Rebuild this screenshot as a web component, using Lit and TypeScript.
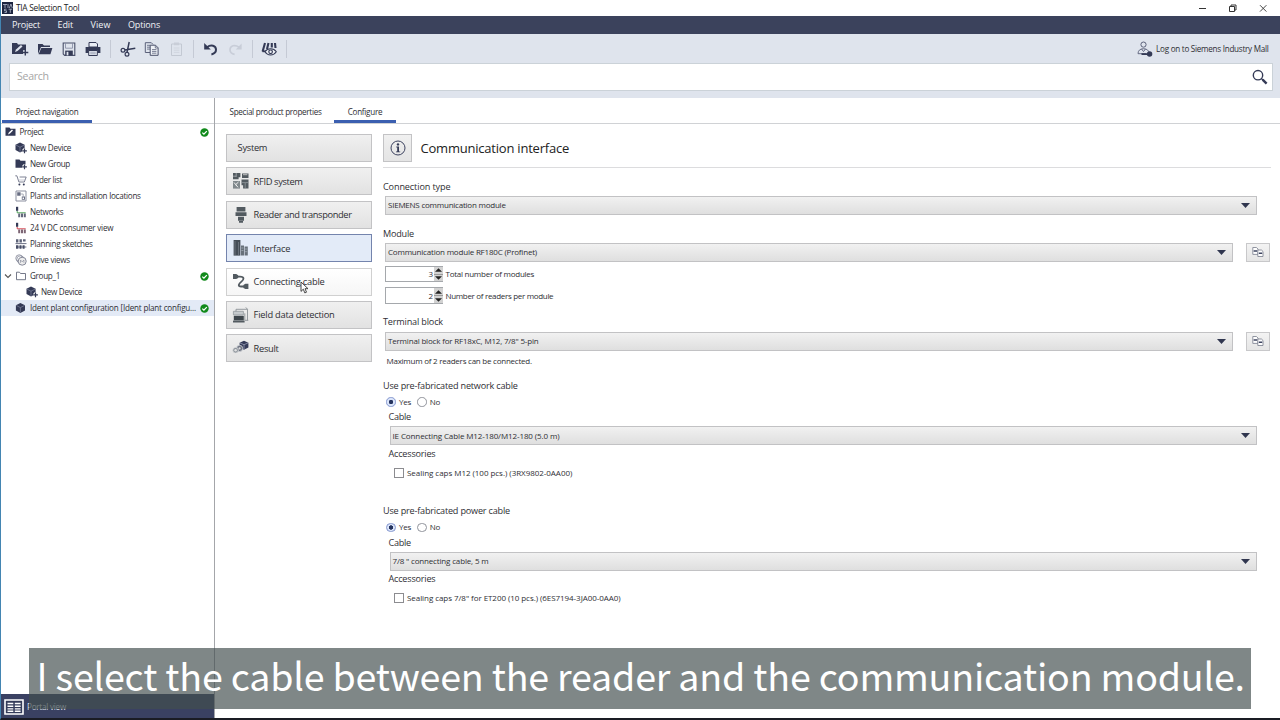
import { LitElement, html, svg, css, TemplateResult } from "lit";

const FAMILY = '"Open Sans"';
const ctx = document.createElement("canvas").getContext("2d")!;

/** Text set at `size` px and tracked so that it runs `width` px wide. */
const fit = (text: string, width: number, size: number, family = FAMILY) => {
  ctx.font = `100px ${family}`;
  const natural = (ctx.measureText(text).width * size) / 100;
  const ls = (width - natural) / text.length;
  return html`<span class="t" style="font-size:${size}px;letter-spacing:${ls.toFixed(3)}px">${text}</span>`;
};

const ic = (w: number, h: number, body: TemplateResult | unknown) =>
  html`<svg width=${w} height=${h} viewBox="0 0 ${w} ${h}" fill="none">${body}</svg>`;

const N = "#343a56";
const cube = svg`<path d="M5 0.6 9.6 2.8V8L5 10.6.5 8V2.8z" fill=${N}/><path d="M.8 3 5 5.2 9.3 3M5 5.2V10" stroke="#8d93ad" stroke-width=".6"/>`;
const plus = svg`<path d="M9.5 6.2v5M7 8.7h5" stroke="#fff" stroke-width="2.6"/><path d="M9.5 6.4v4.8M7.1 8.8h4.8" stroke=${N} stroke-width="1.2"/>`;
const folderFill = svg`<path d="M.5 1.5h4l1 1.2h5v7H.5z" fill=${N}/>`;

const tools = {
  newProject: ic(18, 16, svg`<path d="M1 2h5l1 1.5h8V9l-3 .3V13H1z" fill=${N}/><path d="M4 11l1-2.5L10 4l1.5 1.5-5 4.5z" fill="#dfe4ee"/><path d="M14.3 8.5v6M11.3 11.5h6" stroke=${N} stroke-width="1.4"/>`),
  open: ic(16, 16, svg`<path d="M1 13V3h4.5L7 4.5h6V6H4z" fill=${N}/><path d="M4.3 7H15.4l-2 6.2H1.6z" fill=${N}/>`),
  save: ic(14, 16, svg`<path d="M1.2 2h11.6v12.4H2.6L1.2 13z" stroke="#4a506a" stroke-width="1.1"/><path d="M3.5 2.2v5h7v-5" stroke="#8087a0" stroke-width=".8"/><path d="M3.2 9.6h7.6v4.8H3.2z" fill=${N}/><path d="M4.6 10.8h1.8v3.6H4.6z" fill="#dfe4ee"/>`),
  print: ic(16, 16, svg`<path d="M4 1.5h7l1.5 1.5v3H4z" fill="#e9edf4" stroke=${N}/><path d="M.6 6h14.8v6H.6z" fill=${N}/><path d="M3.7 9.5h8.6v5H3.7z" fill="#e9edf4" stroke=${N}/><path d="M5.2 11.2h5.6M5.2 12.8h5.6" stroke="#8087a0" stroke-width=".7"/>`),
  cut: ic(16, 16, svg`<circle cx="3" cy="9.3" r="1.9" stroke=${N} stroke-width="1.2"/><circle cx="7" cy="13.2" r="1.9" stroke=${N} stroke-width="1.2"/><path d="M4.7 9 15.3 7.2M7 11.4 9.2 1" stroke=${N} stroke-width="1.5"/>`),
  copy: ic(16, 16, svg`<path d="M6 11.5H1.3V1.7h6L9 3.4" stroke="#5b617a"/><path d="M3 4.3h3M3 6.2h3M3 8.1h3" stroke="#5b617a" stroke-width=".8"/><path d="M6.2 4.2h5.3l2.6 2.6v7.5H6.2z" fill="#eef1f6" stroke="#4a506a"/><path d="M11.3 4.4V7h2.6M8 8.6h4.4M8 10.4h4.4M8 12.2h4.4" stroke="#5b617a" stroke-width=".8"/>`),
  paste: ic(14, 16, svg`<path d="M1.5 3h10v11.5h-10z" stroke="#c3c9d3"/><path d="M4 1.5h5v2.7H4z" fill="#c9ced8"/><path d="M3.8 7h5.6M3.8 9.2h5.6M3.8 11.4h5.6" stroke="#cdd2dc" stroke-width=".8"/>`),
  undo: ic(16, 16, svg`<path d="M4 6.2C8 3.3 13 4.5 13 8.8c0 2.5-1.8 4-4.6 4.6" stroke=${N} stroke-width="2"/><path d="M1.2 2v6.6h6.6z" fill=${N}/>`),
  redo: ic(16, 16, svg`<path d="M12 6.2C8 3.3 3 4.5 3 8.8c0 2.5 1.8 4 4.6 4.6" stroke="#c8cdd8" stroke-width="1.6"/><path d="M14.6 2.4v6H8.8z" fill="#c8cdd8"/>`),
  catalog: ic(18, 16, svg`<path d="M4 2 1.6 10.5M7.5 2 6 8M10.8 2v4.5M14 2l.5 5" stroke=${N} stroke-width="2.1"/><path d="M1.4 10.3h4" stroke=${N} stroke-width="1.8"/><path d="M4 10.8c2.5-4 8.6-4 11.3 0-2.7 4.2-8.8 4.2-11.3 0z" fill="#eef1f6" stroke=${N} stroke-width="1.1"/><circle cx="9.6" cy="10.8" r="1.8" stroke=${N} stroke-width="1.2"/>`),
};

const tree = {
  project: ic(12, 12, svg`${folderFill}<path d="M3 8.4l.8-2L7 3.6l1 1L5 7.6z" fill="#fff"/>`),
  device: ic(12, 12, svg`${cube}${plus}`),
  group: ic(12, 12, svg`${folderFill}${plus}`),
  cart: ic(12, 12, svg`<path d="M.3 1.8h1.6l2 6.2h5.4L11.2 3H4.6" stroke="#6f7488" stroke-width=".9"/><path d="M4 6h6" stroke="#a5a9b8" stroke-width=".6"/><circle cx="4.4" cy="10.5" r="1" fill=${N}/><circle cx="8.8" cy="10.5" r="1" fill=${N}/>`),
  plants: ic(12, 12, svg`<path d="M1 1h10v10H1z" stroke="#8b8f9f"/><path d="M2.2 2.3h3.4v3.4H2.2zM6.8 6.6h3.2v3.2H6.8z" fill="#686d82"/><path d="M5.6 4h2.6v2.6" stroke="#8b8f9f" stroke-width=".7"/><path d="M7.6 7.5h1.4v1.4H7.6z" fill="#fff"/>`),
  net: ic(12, 12, svg`<path d="M1 .8h2.2v4H1z" fill=${N}/><path d="M2.2 5v1.8h8.5" stroke="#3f9a4a" stroke-width=".9"/><path d="M3.2 7.6h2v3.6h-2zM6 7.6h2v3.6H6zM8.8 7.6h2v3.6h-2z" fill="#62677b"/>`),
  dc: ic(12, 12, svg`<path d="M1 .8h2.2v4H1z" fill=${N}/><path d="M2.2 5v1.8h8.5" stroke="#d2333f" stroke-width=".9"/><path d="M3.2 7.6h2v3.6h-2zM6 7.6h2v3.6H6zM8.8 7.6h2v3.6h-2z" fill="#7c6574"/>`),
  plan: ic(12, 12, svg`<path d="M1 1.2h2.4v3.4H1zM4.5 1.2h2.4v3.4H4.5zM8 1.2h2.6v2.2H8z" fill="#5c6278"/><path d="M.5 5.6h11M2 9h9.4" stroke="#5c6278" stroke-width=".9"/><path d="M1 7.2h2.4v3.6H1zM4.5 7.2h2v3.6h-2zM7.6 7.2h2v3.6h-2z" fill="#474d66"/>`),
  drive: ic(12, 12, svg`<circle cx="4.2" cy="4.2" r="3.4" stroke="#8d919f" stroke-width=".9"/><circle cx="5.4" cy="5.4" r="3.6" stroke="#8d919f" stroke-width=".8"/><circle cx="7.2" cy="7.2" r="4" fill="#eee" stroke="#777c8d" stroke-width=".9"/><path d="M5.5 8.8V6l1.7 1.9L8.9 6v2.8" stroke="#8d919f" stroke-width=".7"/>`),
  folder: ic(12, 12, svg`<path d="M1.5 2.2h3l1 1.3h5v6.2h-9z" stroke="#666b7d" stroke-width=".9"/>`),
  cube: ic(12, 12, svg`<g transform="translate(.4 .4)">${cube}</g>`),
};
const check = ic(9, 9, svg`<circle cx="4.5" cy="4.5" r="4.2" fill="#118a1b"/><path d="M2.3 4.6l1.6 1.5 2.9-3" stroke="#fff" stroke-width="1.3"/>`);
const chevron = ic(8, 8, svg`<path d="M1 2.5l3 3 3-3" stroke="#555" stroke-width="1.1"/>`);

const G = "#525a60";
const nav = {
  rfid: ic(18, 18, svg`<path d="M1 1h7.4v4.2H6.6v2H1zM10 1.5h6.5v4.4H10z" fill=${G}/><path d="M4.2 1v4M1 4.2h3" stroke="#b9bec2" stroke-width=".7"/><path d="M11 2.7h4.4" stroke="#ccc" stroke-width=".9"/><path d="M1 9h7v7.6H1z" fill="#80888c"/><path d="M2 10.5l4 4.8M6.5 10l-3 2.8" stroke="#eee"/><path d="M9.5 7.6h7v9h-5.4v-3.4H9.5z" fill=${G}/><path d="M10 10.6h6M13.2 11v5" stroke="#9aa1a5" stroke-width=".7"/>`),
  reader: ic(18, 18, svg`<path d="M4.6 1h8.8v4.6H4.6zM3.5 6.3h11v3.8h-11zM6 10.7h6v4H6zM7 15h4v1.8H7z" fill=${G}/>`),
  iface: ic(18, 18, svg`<path d="M1.6 1h6.8v15.6H1.6z" fill="#454d56"/><path d="M9 6.4h3v10.2H9zM12.6 7.5h3.2v9.1h-3.2z" fill="#68717a"/><path d="M3 2v14M6.5 3v13" stroke="#78818a" stroke-width=".7"/><path d="M9.4 9h2M9.4 11.5h2M13 10h2.3M13 12.7h2.3" stroke="#abb3bb" stroke-width=".7"/>`),
  cable: ic(18, 18, svg`<path d="M3 3.6h5c4.8 0 4 3 1.4 5-2.8 2.2-4 4.9-.3 4.9h4" stroke=${G} stroke-width="1.8"/><path d="M1 .9h3.2l2 1.3v2.8l-2 1H1zM16.4 10.8h-3l-2 1.3v2.8l2 1h3z" fill=${G}/>`),
  field: ic(18, 18, svg`<path d="M4 6V3.3h11.5L13.8 1.4M15.5 3.3v11" stroke="#8b9296" stroke-width=".9"/><path d="M1.4 5.3h10v3.6h-10z" fill="#c6cacd" stroke="#899195" stroke-width=".7"/><path d="M1.8 9.8h10v4.6h-10z" fill="#3e464c"/><path d="M1 14.6h11.6v1.9H1z" fill=${G}/><path d="M12.8 7.3v7h3.5" stroke="#8b9296" stroke-width=".9"/>`),
  result: ic(18, 18, svg`<path d="M12 1.8l4.4 1.9v4.8L12 10.7 7.6 8.5V3.7z" fill="#333a58"/><path d="M7.9 3.9l4.1 1.8 4.1-1.8M12 5.7v4.6" stroke="#a4a9bf" stroke-width=".7"/><circle cx="7.6" cy="9.4" r="3.1" fill="#6c7280" stroke="#dcdfe2" stroke-width=".7"/><circle cx="7.6" cy="9.4" r="1.1" fill="#ddd"/><circle cx="3.6" cy="11.2" r="2.8" fill="#8d949c" stroke="#e3e3e3" stroke-width=".7"/><circle cx="3.6" cy="11.2" r="1.2" fill="#e3e3e3"/>`),
};

const row = (icon: unknown, text: string, w: number, level = 1, ok = false, extra = "") =>
  html`<div class="row l${level} ${extra}">${extra === "group" ? html`<i class="chev">${chevron}</i>` : ""}${icon}${fit(text, w, 8.1)}${ok ? html`<i class="ok">${check}</i>` : ""}</div>`;

const navBtn = (icon: unknown, text: string, w: number, cls = "") =>
  html`<div class="nb ${cls}">${icon}${fit(text, w, 9.3)}</div>`;

const select = (text: string, w: number) =>
  html`<div class="select">${fit(text, w, 8)}${ic(9, 5, svg`<path d="M0 0h9L4.5 5z" fill="#30364f"/>`)}</div>`;

const copyBtn = html`<div class="cb">${ic(12, 12, svg`<path d="M.8 1.5h3.6L6 3v5.4H.8z" fill="#fff" stroke="#777c8b" stroke-width=".8"/><path d="M5.8 4h3.6L11 5.5v5H5.8z" fill="#fff" stroke="#777c8b" stroke-width=".8"/><path d="M1.6 4.2h3.4v1.6H1.6zM6.8 6.4h3.4V8H6.8z" fill="#3d4460"/>`)}</div>`;

const spin = (v: string, text: string, w: number) => html`<div class="spinrow">
  <div class="spin"><div class="val">${fit(v, 4.4, 8)}</div>
    <div class="arrows"><b>${ic(7, 4, svg`<path d="M3.5 .3L7 3.7H0z" fill="#222"/>`)}</b><b>${ic(7, 4, svg`<path d="M0 .3h7L3.5 3.7z" fill="#222"/>`)}</b></div></div>
  ${fit(text, w, 8)}</div>`;

const radios = html`<div class="radios"><span class="radio on"></span>${fit("Yes", 12.4, 8)}<span class="radio no"></span>${fit("No", 10.4, 8)}</div>`;

const cable = (sel: string, sw: number, cb: string, cw: number) => html`${radios}
  <div class="sub cab">${fit("Cable", 22.5, 9.1)}</div>
  <div class="line in">${select(sel, sw)}</div>
  <div class="sub acc">${fit("Accessories", 47, 9.1)}</div>
  <div class="check"><span class="box"></span>${fit(cb, cw, 8)}</div>`;

class AppRoot extends LitElement {
  static styles = css`
    :host { display: block; width: 1280px; height: 720px; overflow: hidden; position: relative; background: #fff; font-family: "Open Sans", sans-serif; color: #2e2e33; }
    * { box-sizing: border-box; }
    .t { white-space: pre; line-height: 1; display: block; flex: none; }
    svg { display: block; flex: none; }
    .win { height: 720px; display: flex; flex-direction: column; border-left: 1px solid #4385b2; border-bottom: 2px solid #1a1c24; }
    .title { height: 16px; display: flex; align-items: center; padding-left: 1px; background: #fff; color: #222; }
    .title .t { margin-left: 3px; }
    .wb { margin-left: auto; display: flex; align-items: center; padding-right: 13px; }
    .menu { height: 18px; background: #3b425c; color: #f1f2f6; display: flex; align-items: center; padding: 0 0 1.5px 11px; gap: 17.5px; }
    .top { height: 64px; background: #dfe4ed; display: flex; flex-direction: column; }
    .tools { height: 28.6px; padding-top: 1px; display: flex; align-items: center; padding-left: 7px; }
    .slot { width: 24.4px; display: flex; justify-content: center; flex: none; }
    .sep { width: 1px; height: 18px; background: #c5cad5; margin: 0 4.4px 0 4.6px; flex: none; }
    .logon { margin-left: auto; margin-right: 11.5px; display: flex; align-items: center; gap: 3px; }
    .search { margin: 0 7px 0 8px; height: 28px; background: #fff; border: 1px solid #cbd2d8; display: flex; align-items: center; justify-content: space-between; padding: 0 4.5px 0 7px; color: #a6a6a6; }
    .main { flex: 1; display: flex; min-height: 0; }
    .left { width: 214px; border-right: 1px solid #a4a6aa; display: flex; flex-direction: column; }
    .right { flex: 1; display: flex; flex-direction: column; }
    .tabs { height: 26px; border-bottom: 1px solid #d0d2d5; display: flex; flex: none; }
    .tab { height: 25px; display: flex; align-items: center; justify-content: center; border-bottom: 3px solid transparent; padding-top: 5.5px; }
    .tab.on { border-color: #3b5fb0; }
    .tab.pn { width: 90px; margin-left: 1px; }
    .tab.sp { width: 119px; padding-left: 2px; }
    .tab.cf { width: 62px; }
    .row { height: 16px; display: flex; align-items: center; padding-right: 5px; margin-right: 0.5px; }
    .row .t { margin-left: 3px; }
    .l0 { padding-left: 4px; } .l1 { padding-left: 14px; } .l2 { padding-left: 25px; }
    .row.group { padding-left: 3px; } .chev { margin-right: 3px; }
    .row.sel { background: #e3eaf6; }
    .ok { margin-left: auto; }
    .row.l0 .t { margin-left: 2.5px; }
    .portal { margin-top: auto; height: 24px; background: #3a4162; color: #dfe1ea; display: flex; align-items: center; gap: 3px; padding-left: 3px; padding-top: 2px; }
    .cfg { flex: 1; display: flex; padding: 10px 10px 0 10.6px; }
    .nav { width: 146.5px; display: flex; flex-direction: column; gap: 5.4px; margin-right: 10.9px; }
    .nb { height: 28px; border: 1px solid #c3c3c5; background: linear-gradient(#f0f0f0, #e2e2e2); display: flex; align-items: center; padding-left: 5px; gap: 4px; }
    .nb.sys { padding-left: 11px; gap: 0; }
    .nb.cur { background: #e3ebf8; border-color: #7484ad; }
    .nb.hov { background: linear-gradient(#fff, #f6f6f6); border-color: #d0d0d0; }
    .form { flex: 1; display: flex; flex-direction: column; }
    .head { height: 34.4px; border-bottom: 1px solid #dcdcde; display: flex; gap: 8px; margin: 0 -1px 9.6px 0; flex: none; padding-bottom: 5.4px; }
    .head .t { align-self: center; color: #222; }
    .info { width: 29.5px; border: 1px solid #c3c3c5; background: linear-gradient(#f0f0f0, #e4e4e4); display: flex; align-items: center; justify-content: center; }
    .lab { height: 18px; display: flex; align-items: center; flex: none; }
    .line { height: 19px; display: flex; padding-left: 2.5px; gap: 13px; padding-right: 13.5px; flex: none; }
    .line.wide { padding-right: 0; }
    .line.in { padding-left: 7px; }
    .select { flex: 1; border: 1px solid #c2c2c4; background: linear-gradient(#f1f1f1, #dfdfdf); display: flex; align-items: center; justify-content: space-between; padding: 0 6px 0 1.5px; }
    .cb { width: 24px; border: 1px solid #c8c8ca; background: linear-gradient(#f3f3f3, #e5e5e5); display: flex; align-items: center; justify-content: center; }
    .spins { padding: 4px 0 0 2.5px; display: flex; flex-direction: column; gap: 5px; }
    .spinrow { height: 16.5px; display: flex; align-items: center; gap: 2px; }
    .spin { width: 58px; height: 100%; border: 1px solid #a5a8ac; display: flex; }
    .val { flex: 1; display: flex; justify-content: flex-end; align-items: center; padding-right: 1px; }
    .arrows { width: 9.5px; display: flex; flex-direction: column; background: #999; gap: 1px; margin-right: -1px; }
    .arrows b { flex: 1; background: #d2d2d2; display: flex; align-items: center; justify-content: center; }
    .note { height: 17px; margin-top: 2px; padding-left: 3.5px; display: flex; align-items: center; }
    .radios { height: 15px; display: flex; align-items: center; padding-left: 3.5px; gap: 3px; }
    .radio { width: 9.4px; height: 9.4px; border: 1px solid #90939b; border-radius: 50%; background: #fff; }
    .radio.on { border-color: #8497cf; background: radial-gradient(circle, #25335e 0 1.9px, #dbe5fa 2.5px); }
    .radio.no { margin-left: 3px; }
    .sub { display: flex; align-items: center; padding-left: 5.5px; }
    .cab { height: 15px; margin-bottom: 2px; } .acc { height: 16px; margin-bottom: 3.5px; }
    .check { height: 16px; display: flex; align-items: center; gap: 3px; padding-left: 11px; }
    .box { width: 10px; height: 10px; border: 1px solid #8c8c90; background: #fff; }
    .caption { position: absolute; left: 29px; top: 647.5px; width: 1222px; height: 61px; background: rgba(67, 78, 78, .68); color: #fff; display: flex; align-items: center; padding: 0 0 7px 7.5px; font-family: "Noto Sans CJK SC", sans-serif; }
    .cursor { position: absolute; left: 299.5px; top: 280.5px; }
  `;
  render() {
    const slot = (i: unknown) => html`<span class="slot">${i}</span>`;
    const sep = html`<span class="sep"></span>`;
    return html`<div class="win">
      <div class="title">
        ${ic(11, 12, svg`<path d="M0 0h11v12H0z" fill="#1d2540"/><path d="M1 2.5h4M3 2.5v3.6M6 2v4M7.4 6l1.5-4 1.4 4M4.5 7.2h-2v1.6h2v1.7h-2M6.5 7.2h3.6M8.3 7.2v3.6" stroke="#b9bfd0" stroke-width=".8"/>`)}
        ${fit("TIA Selection Tool", 63.5, 8.4)}
        <div class="wb">${ic(69, 10, svg`<path d="M1 5.5h7" stroke="#333"/><path d="M31.5 3.5h5v5h-5zM33 3.3V2h5v5h-1.3" stroke="#333"/><path d="M62 2.2l6.4 6.4M68.4 2.2L62 8.6" stroke="#333" stroke-width=".9"/>`)}</div>
      </div>
      <div class="menu">${fit("Project", 28, 9)}${fit("Edit", 15.5, 9)}${fit("View", 20, 9)}${fit("Options", 32, 9)}</div>
      <div class="top">
        <div class="tools">
          ${slot(tools.newProject)}${slot(tools.open)}${slot(tools.save)}${slot(tools.print)}${sep}
          ${slot(tools.cut)}${slot(tools.copy)}${slot(tools.paste)}${sep}
          ${slot(tools.undo)}${slot(tools.redo)}${sep}${slot(tools.catalog)}${sep}
          <div class="logon">${ic(16, 16, svg`<circle cx="6.5" cy="3.6" r="2.6" stroke="#5b617a"/><path d="M1 12.7c0-3 2-5 5.5-5s5.3 2 5.5 4M1 12.7h8M4.5 8l2 2.6L8.5 8" stroke="#5b617a" stroke-width=".9"/><path d="M4.5 12.2h6v1.8h-6z" fill=${N}/><circle cx="12.6" cy="13" r="2.7" fill=${N}/>`)}${fit("Log on to Siemens Industry Mall", 112.5, 8.1)}</div>
        </div>
        <div class="search">${fit("Search", 31.8, 10.6)}${ic(16, 16, svg`<circle cx="6" cy="6.2" r="4.7" stroke=${N} stroke-width="1.4"/><path d="M9.4 9.6l1.5 1.4" stroke=${N} stroke-width="1.3"/><path d="M10.6 10.6l4 4" stroke=${N} stroke-width="2.4"/>`)}</div>
      </div>
      <div class="main">
        <div class="left">
          <div class="tabs"><div class="tab pn on">${fit("Project navigation", 62.8, 8.1)}</div></div>
          ${row(tree.project, "Project", 24, 0, true)}
          ${row(tree.device, "New Device", 41)}
          ${row(tree.group, "New Group", 40)}
          ${row(tree.cart, "Order list", 32)}
          ${row(tree.plants, "Plants and installation locations", 110.8)}
          ${row(tree.net, "Networks", 33.3)}
          ${row(tree.dc, "24 V DC consumer view", 83.3)}
          ${row(tree.plan, "Planning sketches", 62.6)}
          ${row(tree.drive, "Drive views", 40)}
          ${row(tree.folder, "Group_1", 30, 1, true, "group")}
          ${row(tree.device, "New Device", 41, 2)}
          ${row(tree.cube, "Ident plant configuration [Ident plant configu...", 166, 1, true, "sel")}
          <div class="portal">${ic(20, 16, svg`<path d="M1 1h18v14H1z" fill="#343c5a" stroke="#fff" stroke-width="1.6"/><path d="M3.5 4.5h5.8M3.5 7.2h5.8M3.5 9.9h5.8M3.5 12.2h5.8M10.8 4.5h5.8M10.8 7.2h5.8M10.8 9.9h5.8M10.8 12.2h5.8" stroke="#fff" stroke-width="1.4"/>`)}${fit("Portal view", 39, 8.1)}</div>
        </div>
        <div class="right">
          <div class="tabs"><div class="tab sp">${fit("Special product properties", 92, 8.1)}</div><div class="tab cf on">${fit("Configure", 34.6, 8.1)}</div></div>
          <div class="cfg">
            <div class="nav">
              ${navBtn("", "System", 29.6, "sys")}
              ${navBtn(nav.rfid, "RFID system", 49)}
              ${navBtn(nav.reader, "Reader and transponder", 98)}
              ${navBtn(nav.iface, "Interface", 36.6, "cur")}
              ${navBtn(nav.cable, "Connecting cable", 71, "hov")}
              ${navBtn(nav.field, "Field data detection", 81)}
              ${navBtn(nav.result, "Result", 25)}
            </div>
            <div class="form">
              <div class="head"><div class="info">${ic(16, 16, svg`<circle cx="8" cy="8" r="7" stroke="#3d4360" stroke-width="1"/><circle cx="8" cy="4.4" r="1.2" fill=${N}/><path d="M6.3 6.6H9v4.8h1.2v.9H6v-.9h1.2V7.5h-.9z" fill=${N}/>`)}</div>${fit("Communication interface", 148.6, 13)}</div>
              <div class="lab">${fit("Connection type", 67.5, 9.1)}</div>
              <div class="line">${select("SIEMENS communication module", 117.7)}</div>
              <div class="lab" style="margin:9.4px 0 .6px">${fit("Module", 31, 9.1)}</div>
              <div class="line wide">${select("Communication module RF180C (Profinet)", 149)}${copyBtn}</div>
              <div class="spins">${spin("3", "Total number of modules", 88.6)}${spin("2", "Number of readers per module", 107.8)}</div>
              <div class="lab" style="margin:9px 0 1px">${fit("Terminal block", 60, 9.1)}</div>
              <div class="line wide">${select('Terminal block for RF18xC, M12, 7/8" 5-pin', 150.5)}${copyBtn}</div>
              <div class="note">${fit("Maximum of 2 readers can be connected.", 145.3, 8)}</div>
              <div class="lab" style="margin-top:6.5px">${fit("Use pre-fabricated network cable", 134.8, 9.1)}</div>
              ${cable("IE Connecting Cable M12-180/M12-180 (5.0 m)", 167, "Sealing caps M12 (100 pcs.) (3RX9802-0AA00)", 165.3)}
              <div class="lab" style="margin-top:20.8px">${fit("Use pre-fabricated power cable", 127, 9.1)}</div>
              ${cable('7/8 " connecting cable, 5 m', 96, 'Sealing caps 7/8" for ET200 (10 pcs.) (6ES7194-3JA00-0AA0)', 213.6)}
            </div>
          </div>
        </div>
      </div>
    </div>
    <div class="cursor">${ic(9, 13, svg`<path d="M1 1v9.4l2.3-2.2 1.5 3.7 1.7-.7L5 7.7h3z" fill="#fff" stroke="#333" stroke-width=".9"/>`)}</div>
    <div class="caption">${fit("I select the cable between the reader and the communication module.", 1209, 37.6, '"Noto Sans CJK SC"')}</div>`;
  }
}
customElements.define("app-root", AppRoot);
